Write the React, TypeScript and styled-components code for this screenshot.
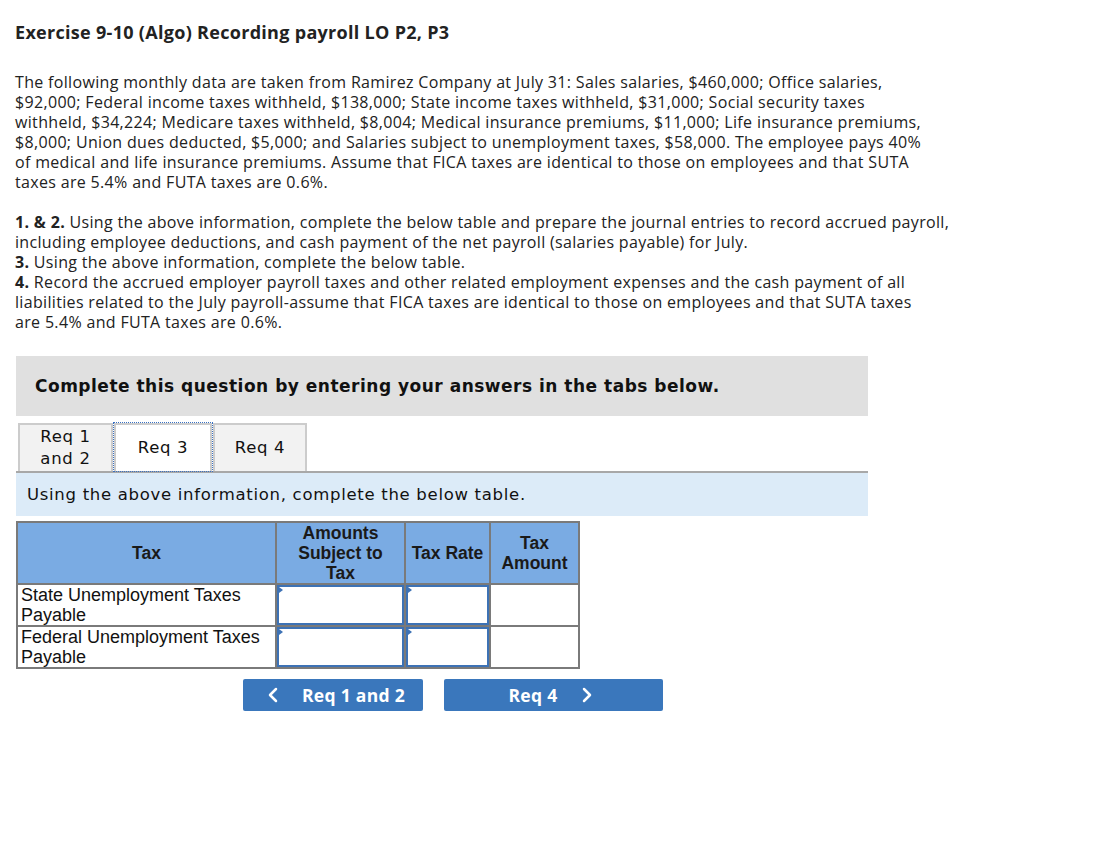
import React from "react";
import styled, { createGlobalStyle } from "styled-components";
import { ChevronLeft, ChevronRight } from "lucide-react";

const Global = createGlobalStyle`
  html, body { margin: 0; padding: 0; background: #fff; }
  body { font-family: "Open Sans", "Lato", sans-serif; color: #222; }
`;

const Page = styled.div`
  padding: 21px 0 40px 15px;
  width: 1000px;
`;

const Title = styled.h1`
  margin: 0;
  font-family: "Open Sans", sans-serif;
  font-weight: 700;
  font-size: 18px;
  letter-spacing: 0.3px;
  line-height: 22px;
  color: #222;
`;

const Para = styled.div<{ $top?: number }>`
  margin: ${(p) => p.$top ?? 0}px 0 0 0;
  font-family: "Open Sans", sans-serif;
  font-size: 16px;
  letter-spacing: 0.33px;
  line-height: 20px;
  color: #222;
`;

const Line = styled.span`
  display: block;
  white-space: nowrap;
`;

const Banner = styled.div`
  margin: 24px 0 0 1px;
  width: 852px;
  height: 60px;
  background: #e0e0e0;
  display: flex;
  align-items: center;
  padding-left: 19px;
  box-sizing: border-box;
  font-family: "DejaVu Sans", Verdana, sans-serif;
  font-weight: 700;
  font-size: 17px;
  letter-spacing: 0.5px;
  color: #111;
`;

const TabBar = styled.div`
  margin: 7px 0 0 1px;
  width: 852px;
  display: flex;
  align-items: flex-end;
  padding-left: 2px;
  box-sizing: border-box;
  border-bottom: 2px solid #a8a8a8;
`;

const Tab = styled.div<{ $active?: boolean; $w: number }>`
  width: ${(p) => p.$w}px;
  height: 48px;
  box-sizing: border-box;
  display: flex;
  align-items: center;
  justify-content: center;
  text-align: center;
  background: ${(p) => (p.$active ? "#fff" : "#f2f2f2")};
  border: 2px solid #cccccc;
  border-bottom: none;
  margin-right: 1px;
  font-family: "DejaVu Sans", Verdana, sans-serif;
  font-size: 16.5px;
  letter-spacing: 0.7px;
  line-height: 22px;
  color: #111;
  outline: ${(p) => (p.$active ? "1px dotted #3a70c0" : "none")};
  outline-offset: 0px;
`;

const InfoBar = styled.div`
  margin-left: 1px;
  width: 852px;
  height: 43px;
  background: #dcebf8;
  display: flex;
  align-items: center;
  padding-left: 11px;
  box-sizing: border-box;
  font-family: "DejaVu Sans", Verdana, sans-serif;
  font-size: 16.5px;
  letter-spacing: 0.7px;
  color: #111;
`;

const Table = styled.table`
  margin: 5px 0 0 1px;
  border-collapse: collapse;
  width: 562px;
  font-family: "Liberation Sans", Arial, sans-serif;
  font-size: 17.5px;
  color: #111;
  table-layout: fixed;
`;

const Th = styled.th<{ $w: number }>`
  width: ${(p) => p.$w}px;
  height: 59px;
  background: #7aabe3;
  border: 2px solid #7a7a7a;
  font-weight: 700;
  line-height: 20px;
  padding: 0 2px;
  text-align: center;
  vertical-align: middle;
  color: #1a1a1a;
`;

const Td = styled.td`
  height: 38px;
  border: 2px solid #7a7a7a;
  padding: 0;
  vertical-align: top;
`;

const Label = styled.div`
  padding: 0 3px;
  line-height: 20px;
  white-space: nowrap;
  font-size: 18px;
`;

const InputBox = styled.div`
  position: relative;
  height: 40px;
  box-sizing: border-box;
  border: 2px solid #3d72b5;
  background: #fff;
  &::before {
    content: "";
    position: absolute;
    left: 0;
    top: 0;
    width: 0;
    height: 0;
    border-top: 3px solid transparent;
    border-bottom: 3px solid transparent;
    border-left: 4px solid #3d72b5;
  }
`;

const NavRow = styled.div`
  margin: 10px 0 0 228px;
  display: flex;
  gap: 21px;
`;

const NavButton = styled.button<{ $w: number }>`
  width: ${(p) => p.$w}px;
  height: 32px;
  background: #3a77bc;
  border: none;
  border-radius: 2px;
  color: #fff;
  font-family: "Open Sans", sans-serif;
  font-weight: 700;
  font-size: 17.5px;
  letter-spacing: 0.3px;
  display: flex;
  align-items: center;
  justify-content: center;
  gap: 17px;
  padding: 0;
  cursor: pointer;
`;

export default function App() {
  return (
    <>
      <Global />
      <Page>
        <Title>Exercise 9-10 (Algo) Recording payroll LO P2, P3</Title>
        <Para $top={29}>
          <Line>The following monthly data are taken from Ramirez Company at July 31: Sales salaries, $460,000; Office salaries,</Line>
          <Line>$92,000; Federal income taxes withheld, $138,000; State income taxes withheld, $31,000; Social security taxes</Line>
          <Line>withheld, $34,224; Medicare taxes withheld, $8,004; Medical insurance premiums, $11,000; Life insurance premiums,</Line>
          <Line>$8,000; Union dues deducted, $5,000; and Salaries subject to unemployment taxes, $58,000. The employee pays 40%</Line>
          <Line>of medical and life insurance premiums. Assume that FICA taxes are identical to those on employees and that SUTA</Line>
          <Line>taxes are 5.4% and FUTA taxes are 0.6%.</Line>
        </Para>
        <Para $top={20}>
          <Line>
            <b>1. &amp; 2.</b> Using the above information, complete the below table and prepare the journal entries to record accrued payroll,
          </Line>
          <Line>including employee deductions, and cash payment of the net payroll (salaries payable) for July.</Line>
          <Line>
            <b>3.</b> Using the above information, complete the below table.
          </Line>
          <Line>
            <b>4.</b> Record the accrued employer payroll taxes and other related employment expenses and the cash payment of all
          </Line>
          <Line>liabilities related to the July payroll-assume that FICA taxes are identical to those on employees and that SUTA taxes</Line>
          <Line>are 5.4% and FUTA taxes are 0.6%.</Line>
        </Para>
        <Banner>Complete this question by entering your answers in the tabs below.</Banner>
        <TabBar>
          <Tab $w={95}>
            Req 1<br />
            and 2
          </Tab>
          <Tab $w={98} $active>
            Req 3
          </Tab>
          <Tab $w={94}>Req 4</Tab>
        </TabBar>
        <InfoBar>Using the above information, complete the below table.</InfoBar>
        <Table>
          <thead>
            <tr>
              <Th $w={253}>Tax</Th>
              <Th $w={123}>
                Amounts
                <br />
                Subject to
                <br />
                Tax
              </Th>
              <Th $w={79}>Tax Rate</Th>
              <Th $w={83}>
                Tax
                <br />
                Amount
              </Th>
            </tr>
          </thead>
          <tbody>
            <tr>
              <Td>
                <Label>
                  State Unemployment Taxes
                  <br />
                  Payable
                </Label>
              </Td>
              <Td>
                <InputBox />
              </Td>
              <Td>
                <InputBox />
              </Td>
              <Td />
            </tr>
            <tr>
              <Td>
                <Label>
                  Federal Unemployment Taxes
                  <br />
                  Payable
                </Label>
              </Td>
              <Td>
                <InputBox />
              </Td>
              <Td>
                <InputBox />
              </Td>
              <Td />
            </tr>
          </tbody>
        </Table>
        <NavRow>
          <NavButton $w={180}>
            <ChevronLeft size={24} strokeWidth={2.5} />
            <span>Req 1 and 2</span>
          </NavButton>
          <NavButton $w={219}>
            <span>Req 4</span>
            <ChevronRight size={24} strokeWidth={2.5} />
          </NavButton>
        </NavRow>
      </Page>
    </>
  );
}
